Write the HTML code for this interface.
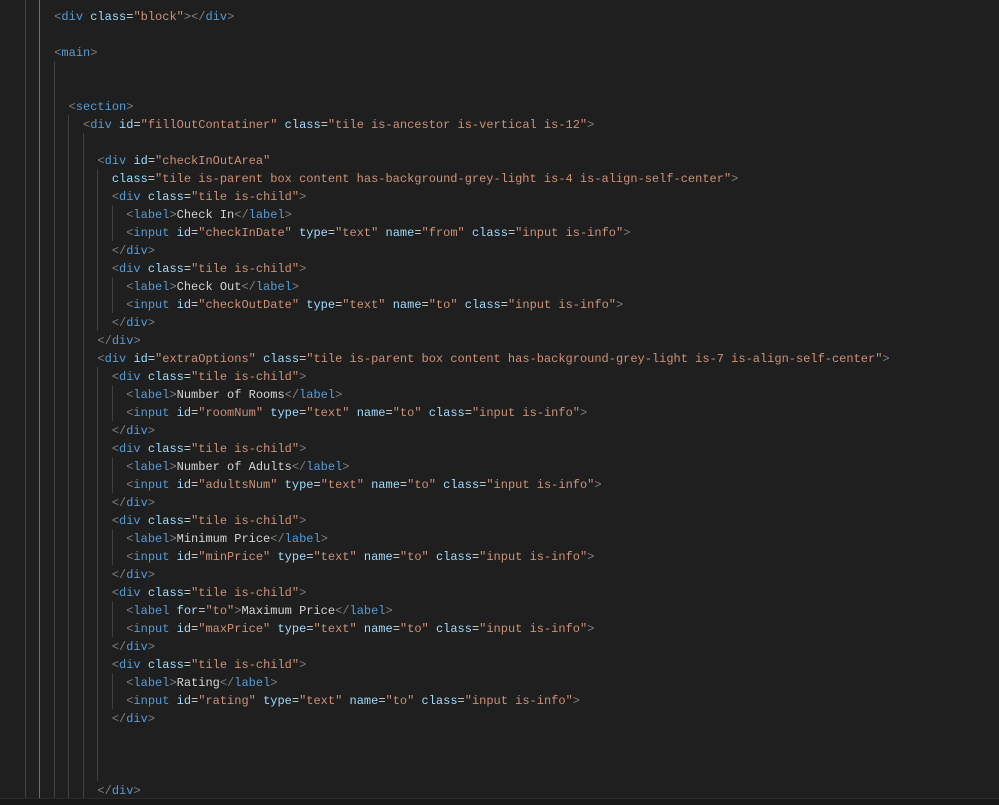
<!DOCTYPE html>
<html><head><meta charset="utf-8"><style>
html,body{margin:0;padding:0;}
body{width:999px;height:804px;background:#1f1f1f;position:relative;overflow:hidden;font-family:"Liberation Mono",monospace;font-size:12px;color:#d4d4d4;}
.l{position:absolute;left:11px;height:18px;line-height:18px;white-space:pre;margin-top:1px;}
.b{color:#808080}.t{color:#569cd6}.a{color:#9cdcfe}.s{color:#ce9178}
.g{position:absolute;width:1px;background:#404040}
.bar{position:absolute;left:0;top:798px;width:999px;height:6px;background:#181818;border-top:1px solid #2b2b2b}
</style></head><body>
<div class="g" style="left:25px;top:0;height:798px"></div>
<div class="g" style="left:39px;top:0;height:798px;background:#6e6e6e"></div>
<div class="g" style="left:54px;top:61px;height:737px"></div>
<div class="g" style="left:68px;top:115px;height:683px"></div>
<div class="g" style="left:83px;top:133px;height:665px"></div>
<div class="g" style="left:97px;top:169px;height:162px"></div>
<div class="g" style="left:97px;top:367px;height:414px"></div>
<div class="g" style="left:112px;top:205px;height:36px"></div>
<div class="g" style="left:112px;top:277px;height:36px"></div>
<div class="g" style="left:112px;top:385px;height:36px"></div>
<div class="g" style="left:112px;top:457px;height:36px"></div>
<div class="g" style="left:112px;top:529px;height:36px"></div>
<div class="g" style="left:112px;top:601px;height:36px"></div>
<div class="g" style="left:112px;top:673px;height:36px"></div>

<div class="l" style="top:7px">      <span class="b">&lt;</span><span class="t">div</span> <span class="a">class</span>=<span class="s">"block"</span><span class="b">&gt;&lt;/</span><span class="t">div</span><span class="b">&gt;</span></div>
<div class="l" style="top:43px">      <span class="b">&lt;</span><span class="t">main</span><span class="b">&gt;</span></div>
<div class="l" style="top:97px">        <span class="b">&lt;</span><span class="t">section</span><span class="b">&gt;</span></div>
<div class="l" style="top:115px">          <span class="b">&lt;</span><span class="t">div</span> <span class="a">id</span>=<span class="s">"fillOutContatiner"</span> <span class="a">class</span>=<span class="s">"tile is-ancestor is-vertical is-12"</span><span class="b">&gt;</span></div>
<div class="l" style="top:151px">            <span class="b">&lt;</span><span class="t">div</span> <span class="a">id</span>=<span class="s">"checkInOutArea"</span></div>
<div class="l" style="top:169px">              <span class="a">class</span>=<span class="s">"tile is-parent box content has-background-grey-light is-4 is-align-self-center"</span><span class="b">&gt;</span></div>
<div class="l" style="top:187px">              <span class="b">&lt;</span><span class="t">div</span> <span class="a">class</span>=<span class="s">"tile is-child"</span><span class="b">&gt;</span></div>
<div class="l" style="top:205px">                <span class="b">&lt;</span><span class="t">label</span><span class="b">&gt;</span>Check In<span class="b">&lt;/</span><span class="t">label</span><span class="b">&gt;</span></div>
<div class="l" style="top:223px">                <span class="b">&lt;</span><span class="t">input</span> <span class="a">id</span>=<span class="s">"checkInDate"</span> <span class="a">type</span>=<span class="s">"text"</span> <span class="a">name</span>=<span class="s">"from"</span> <span class="a">class</span>=<span class="s">"input is-info"</span><span class="b">&gt;</span></div>
<div class="l" style="top:241px">              <span class="b">&lt;/</span><span class="t">div</span><span class="b">&gt;</span></div>
<div class="l" style="top:259px">              <span class="b">&lt;</span><span class="t">div</span> <span class="a">class</span>=<span class="s">"tile is-child"</span><span class="b">&gt;</span></div>
<div class="l" style="top:277px">                <span class="b">&lt;</span><span class="t">label</span><span class="b">&gt;</span>Check Out<span class="b">&lt;/</span><span class="t">label</span><span class="b">&gt;</span></div>
<div class="l" style="top:295px">                <span class="b">&lt;</span><span class="t">input</span> <span class="a">id</span>=<span class="s">"checkOutDate"</span> <span class="a">type</span>=<span class="s">"text"</span> <span class="a">name</span>=<span class="s">"to"</span> <span class="a">class</span>=<span class="s">"input is-info"</span><span class="b">&gt;</span></div>
<div class="l" style="top:313px">              <span class="b">&lt;/</span><span class="t">div</span><span class="b">&gt;</span></div>
<div class="l" style="top:331px">            <span class="b">&lt;/</span><span class="t">div</span><span class="b">&gt;</span></div>
<div class="l" style="top:349px">            <span class="b">&lt;</span><span class="t">div</span> <span class="a">id</span>=<span class="s">"extraOptions"</span> <span class="a">class</span>=<span class="s">"tile is-parent box content has-background-grey-light is-7 is-align-self-center"</span><span class="b">&gt;</span></div>
<div class="l" style="top:367px">              <span class="b">&lt;</span><span class="t">div</span> <span class="a">class</span>=<span class="s">"tile is-child"</span><span class="b">&gt;</span></div>
<div class="l" style="top:385px">                <span class="b">&lt;</span><span class="t">label</span><span class="b">&gt;</span>Number of Rooms<span class="b">&lt;/</span><span class="t">label</span><span class="b">&gt;</span></div>
<div class="l" style="top:403px">                <span class="b">&lt;</span><span class="t">input</span> <span class="a">id</span>=<span class="s">"roomNum"</span> <span class="a">type</span>=<span class="s">"text"</span> <span class="a">name</span>=<span class="s">"to"</span> <span class="a">class</span>=<span class="s">"input is-info"</span><span class="b">&gt;</span></div>
<div class="l" style="top:421px">              <span class="b">&lt;/</span><span class="t">div</span><span class="b">&gt;</span></div>
<div class="l" style="top:439px">              <span class="b">&lt;</span><span class="t">div</span> <span class="a">class</span>=<span class="s">"tile is-child"</span><span class="b">&gt;</span></div>
<div class="l" style="top:457px">                <span class="b">&lt;</span><span class="t">label</span><span class="b">&gt;</span>Number of Adults<span class="b">&lt;/</span><span class="t">label</span><span class="b">&gt;</span></div>
<div class="l" style="top:475px">                <span class="b">&lt;</span><span class="t">input</span> <span class="a">id</span>=<span class="s">"adultsNum"</span> <span class="a">type</span>=<span class="s">"text"</span> <span class="a">name</span>=<span class="s">"to"</span> <span class="a">class</span>=<span class="s">"input is-info"</span><span class="b">&gt;</span></div>
<div class="l" style="top:493px">              <span class="b">&lt;/</span><span class="t">div</span><span class="b">&gt;</span></div>
<div class="l" style="top:511px">              <span class="b">&lt;</span><span class="t">div</span> <span class="a">class</span>=<span class="s">"tile is-child"</span><span class="b">&gt;</span></div>
<div class="l" style="top:529px">                <span class="b">&lt;</span><span class="t">label</span><span class="b">&gt;</span>Minimum Price<span class="b">&lt;/</span><span class="t">label</span><span class="b">&gt;</span></div>
<div class="l" style="top:547px">                <span class="b">&lt;</span><span class="t">input</span> <span class="a">id</span>=<span class="s">"minPrice"</span> <span class="a">type</span>=<span class="s">"text"</span> <span class="a">name</span>=<span class="s">"to"</span> <span class="a">class</span>=<span class="s">"input is-info"</span><span class="b">&gt;</span></div>
<div class="l" style="top:565px">              <span class="b">&lt;/</span><span class="t">div</span><span class="b">&gt;</span></div>
<div class="l" style="top:583px">              <span class="b">&lt;</span><span class="t">div</span> <span class="a">class</span>=<span class="s">"tile is-child"</span><span class="b">&gt;</span></div>
<div class="l" style="top:601px">                <span class="b">&lt;</span><span class="t">label</span> <span class="a">for</span>=<span class="s">"to"</span><span class="b">&gt;</span>Maximum Price<span class="b">&lt;/</span><span class="t">label</span><span class="b">&gt;</span></div>
<div class="l" style="top:619px">                <span class="b">&lt;</span><span class="t">input</span> <span class="a">id</span>=<span class="s">"maxPrice"</span> <span class="a">type</span>=<span class="s">"text"</span> <span class="a">name</span>=<span class="s">"to"</span> <span class="a">class</span>=<span class="s">"input is-info"</span><span class="b">&gt;</span></div>
<div class="l" style="top:637px">              <span class="b">&lt;/</span><span class="t">div</span><span class="b">&gt;</span></div>
<div class="l" style="top:655px">              <span class="b">&lt;</span><span class="t">div</span> <span class="a">class</span>=<span class="s">"tile is-child"</span><span class="b">&gt;</span></div>
<div class="l" style="top:673px">                <span class="b">&lt;</span><span class="t">label</span><span class="b">&gt;</span>Rating<span class="b">&lt;/</span><span class="t">label</span><span class="b">&gt;</span></div>
<div class="l" style="top:691px">                <span class="b">&lt;</span><span class="t">input</span> <span class="a">id</span>=<span class="s">"rating"</span> <span class="a">type</span>=<span class="s">"text"</span> <span class="a">name</span>=<span class="s">"to"</span> <span class="a">class</span>=<span class="s">"input is-info"</span><span class="b">&gt;</span></div>
<div class="l" style="top:709px">              <span class="b">&lt;/</span><span class="t">div</span><span class="b">&gt;</span></div>
<div class="l" style="top:781px">            <span class="b">&lt;/</span><span class="t">div</span><span class="b">&gt;</span></div>
<div class="bar"></div>
</body></html>
